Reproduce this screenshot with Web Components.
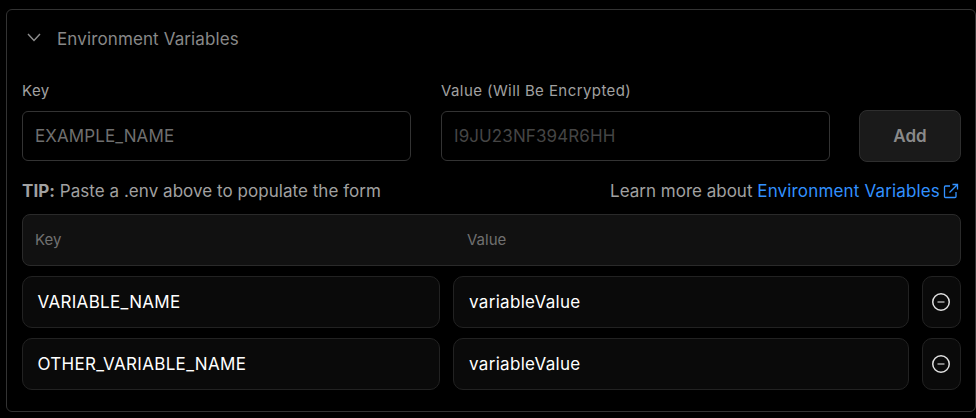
<!DOCTYPE html>
<html><head><meta charset="utf-8">
<style>
html,body{margin:0;background:#000;height:418px;overflow:hidden}
body{font-family:Inter,"Liberation Sans",sans-serif;color:#fff}
</style></head><body>
<env-panel>
  <env-field slot="key" label="Key" placeholder="EXAMPLE_NAME" tone="#6f6f6f"></env-field>
  <env-field slot="value" label="Value (Will Be Encrypted)" placeholder="I9JU23NF394R6HH" tone="#454545"></env-field>
  <env-row k="VARIABLE_NAME" v="variableValue"></env-row>
  <env-row k="OTHER_VARIABLE_NAME" v="variableValue"></env-row>
</env-panel>
<script>
class EnvField extends HTMLElement{
  connectedCallback(){
    const r=this.attachShadow({mode:'open'});
    r.innerHTML=`<style>
    :host{display:block;width:389px}
    label{display:block;font-size:15px;line-height:20px;color:#a1a1a1;padding-top:1px;margin-bottom:10px;letter-spacing:.42px}
    div{box-sizing:border-box;height:50px;border:1px solid #333;border-radius:6px;padding:0 12px;display:flex;align-items:center;font-size:17px;letter-spacing:.1px;color:${this.getAttribute('tone')}}
    </style><label>${this.getAttribute('label')}</label><div>${this.getAttribute('placeholder')}</div>`;
  }
}
class EnvRow extends HTMLElement{
  connectedCallback(){
    const r=this.attachShadow({mode:'open'});
    r.innerHTML=`<style>
    :host{display:grid;grid-template-columns:418px 456px 39px;column-gap:13px;height:52px}
    div{box-sizing:border-box;height:52px;background:#0a0a0a;border:1px solid #222;border-radius:10px;display:flex;align-items:center;font-size:17px;letter-spacing:.32px;padding-left:14.5px;color:#fff}
    div+div{padding-left:15px}
    div+div+div{padding:0;justify-content:center}
    svg{display:block;margin-right:1px}
    </style><div>${this.getAttribute('k')}</div><div>${this.getAttribute('v')}</div>
    <div><svg width="18" height="18" viewBox="0 0 18 18" fill="none"><circle cx="9" cy="9" r="8.25" stroke="#e0e0e0" stroke-width="1.5"/><path d="M5.5 9h7" stroke="#a8a8a8" stroke-width="1.5"/></svg></div>`;
  }
}
class EnvPanel extends HTMLElement{
  connectedCallback(){
    const r=this.attachShadow({mode:'open'});
    r.innerHTML=`<style>
    :host{display:block;box-sizing:border-box;width:970px;height:403px;margin:9px 0 0 6px;border:1px solid #333;border-radius:6px;padding:0 14px 0 15px}
    .head{display:flex;align-items:center;height:55px;font-size:17px;color:#888;letter-spacing:.12px;gap:16px;padding-left:5px}
    .head svg{display:block}
    .head span{padding-top:2px}
    .form{display:flex;margin-top:15px;align-items:flex-end}
    .gap{width:30px}
    .add{box-sizing:border-box;width:102px;height:52px;margin-left:29px;margin-bottom:-1px;background:#1a1a1a;border:1px solid #2e2e2e;border-radius:8px;display:flex;align-items:center;justify-content:center;font-size:17px;font-weight:600;color:#8a8a8a}
    .tip{display:flex;justify-content:space-between;align-items:center;margin-top:20px;height:20px;font-size:17px;color:#a1a1a1;letter-spacing:.04px}
    b{font-weight:700}
    .more{display:flex;align-items:center;gap:3px;padding-right:2px;letter-spacing:0}
    .more a{color:#3291ff;text-decoration:none;letter-spacing:.16px}
    .th{box-sizing:border-box;display:flex;height:52px;margin-top:13px;padding-bottom:1px;background:#111;border:1px solid #2a2a2a;border-radius:8px;align-items:center;font-size:15px;color:#707070;padding-left:12px}
    .th span:first-child{width:432px}
    .rows{display:flex;flex-direction:column;gap:10px;margin-top:10px}
    </style>
    <div class="head"><svg width="14" height="9" viewBox="0 0 14 9" fill="none"><path d="M1 1l6 6.5L13 1" stroke="#8f8f8f" stroke-width="1.4"/></svg><span>Environment Variables</span></div>
    <div class="form"><slot name="key"></slot><div class="gap"></div><slot name="value"></slot><div class="add">Add</div></div>
    <div class="tip"><span><b>TIP:</b> Paste a .env above to populate the form</span>
    <span class="more"><span>Learn more about <a>Environment Variables</a></span><svg width="16" height="16" viewBox="0 0 16 16" fill="none" stroke="#3291ff" stroke-width="1.3"><path d="M7 3H2.5A1 1 0 0 0 1.5 4v9.5a1 1 0 0 0 1 1H12a1 1 0 0 0 1-1V9"/><path d="M6.5 9.5L14.5 1.5M9.5 1.5h5v5"/></svg></span></div>
    <div class="th"><span>Key</span><span>Value</span></div>
    <div class="rows"><slot></slot></div>`;
  }
}
customElements.define('env-field',EnvField);
customElements.define('env-row',EnvRow);
customElements.define('env-panel',EnvPanel);
</script>
</body></html>
